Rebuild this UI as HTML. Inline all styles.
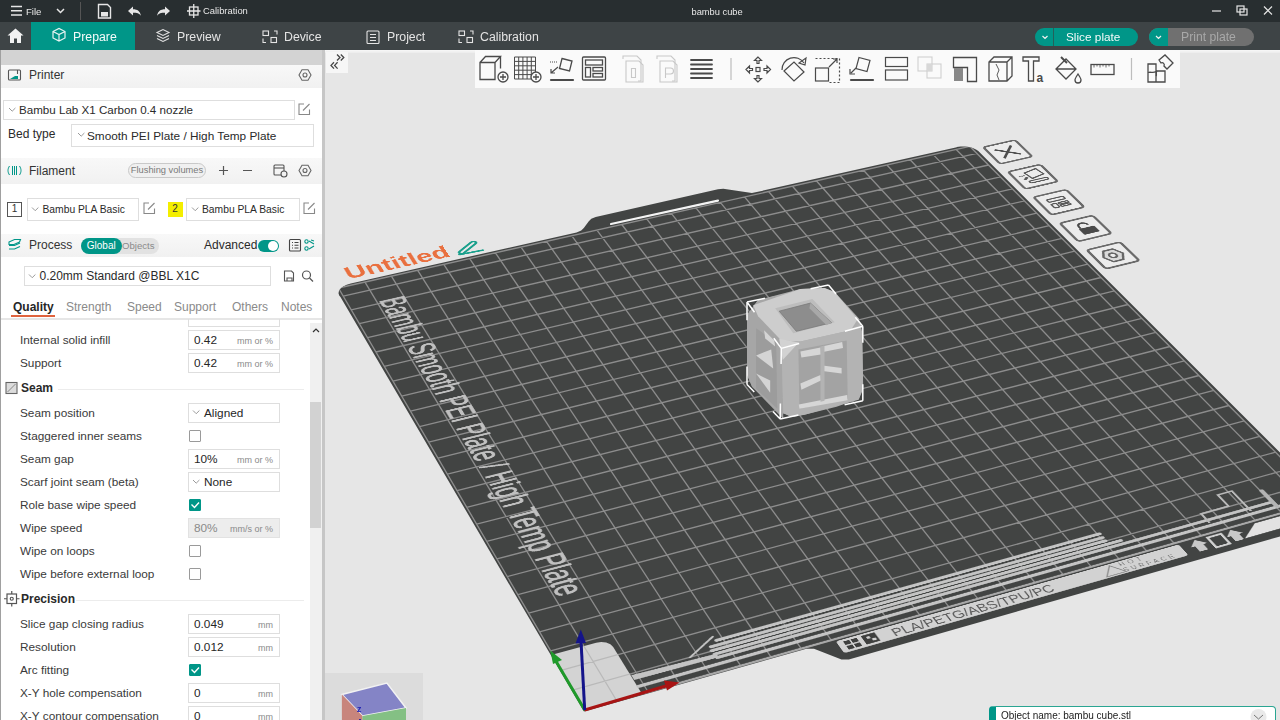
<!DOCTYPE html>
<html><head><meta charset="utf-8"><style>
*{box-sizing:border-box;margin:0;padding:0}
html,body{width:1280px;height:720px;overflow:hidden;background:#e6e6e6;font-family:"Liberation Sans",sans-serif;}
.a{position:absolute}

#title{left:0;top:0;width:1280px;height:22px;background:#282e30;color:#e8e8e8}
#tabs{left:0;top:22px;width:1280px;height:28px;background:#3e4446;color:#e4e4e4}
.tt{font-size:12.3px;line-height:28px;position:absolute;top:1px}


#panel{left:0;top:50px;width:322px;height:670px;background:#fff;overflow:hidden}
.hd{position:absolute;left:1px;width:321px;background:linear-gradient(#f8f8f8,#f1f1f1)}
.ht{position:absolute;left:29px;font-size:12px;color:#333;line-height:23px}
.lb{position:absolute;left:20px;font-size:11.8px;color:#3a3a3a;line-height:16px}
.bx{position:absolute;left:188px;width:92px;height:20px;border:1px solid #dedede;background:#fff}
.bx .v{position:absolute;left:5px;top:0;font-size:11.8px;line-height:18px;color:#262626}
.bx .u{position:absolute;right:6px;top:1px;font-size:9px;line-height:18px;color:#8a8a8a}
.cb{position:absolute;left:189px;width:12px;height:12px;border:1px solid #9a9a9a;background:#fff;border-radius:1px}
.cbk{background:#009688;border-color:#009688}
.dd{position:absolute;border:1px solid #dedede;background:#fff}
.dd .t{position:absolute;font-size:12px;color:#2a2a2a;line-height:18px;white-space:nowrap}
.sh{position:absolute;left:21px;font-size:12px;font-weight:bold;color:#2a2a2a;line-height:16px}
.sl{position:absolute;height:1px;background:#ececec}
.tb{position:absolute;font-size:12px;color:#8a8a8a;line-height:16px}

</style></head><body>
<svg class="a" style="left:0;top:0" width="1280" height="720">
<defs><clipPath id="cp"><polygon points="584.0,711.6 340.3,296.8 339.2,295.5 338.5,293.2 339.0,290.8 340.6,288.5 343.2,286.4 346.7,284.7 350.8,283.4 576.6,232.4 581.2,230.6 583.8,228.1 588.8,221.2 591.3,218.7 595.7,216.9 718.0,189.3 723.3,188.7 751.9,193.1 956.8,147.2 956.7,147.1 960.7,146.5 964.8,146.5 969.0,146.9 972.8,147.9 976.0,149.4 978.3,151.1 1334.5,506.9 1345.5,517.8 848.8,659.6 841.5,659.5 814.0,648.7 806.5,648.7"/></clipPath><clipPath id="ex"><polygon points="585.2,709.8 552.9,654.6 596.2,642.7 601.2,642.0 606.2,642.6 610.4,644.3 613.2,647.0 641.9,693.8"/></clipPath></defs>
<polygon points="584.0,711.6 340.3,296.8 339.2,295.5 338.5,293.2 339.0,290.8 340.6,288.5 343.2,286.4 346.7,284.7 350.8,283.4 576.6,232.4 581.2,230.6 583.8,228.1 588.8,221.2 591.3,218.7 595.7,216.9 718.0,189.3 723.3,188.7 751.9,193.1 956.8,147.2 956.7,147.1 960.7,146.5 964.8,146.5 969.0,146.9 972.8,147.9 976.0,149.4 978.3,151.1 1334.5,506.9 1345.5,517.8 848.8,659.6 841.5,659.5 814.0,648.7 806.5,648.7" fill="#424443"/>
<g clip-path="url(#cp)"><path d="M585.2,709.8L338.5,288.0 M585.2,709.8L1324.4,501.1 M616.8,700.9L365.0,282.1 M573.5,689.8L1307.9,484.5 M648.2,692.0L391.4,276.1 M562.0,670.1L1291.6,468.2 M679.3,683.2L417.7,270.3 M550.7,650.8L1275.5,452.2 M710.2,674.5L443.8,264.4 M539.5,631.8L1259.7,436.4 M740.8,665.9L469.7,258.6 M528.6,613.1L1244.2,420.8 M771.2,657.3L495.4,252.8 M517.9,594.7L1228.9,405.5 M801.4,648.8L521.0,247.1 M507.3,576.6L1213.8,390.4 M831.4,640.3L546.5,241.4 M496.9,558.9L1198.9,375.5 M861.2,631.9L571.7,235.7 M486.7,541.4L1184.3,360.9 M890.7,623.6L596.9,230.1 M476.6,524.2L1169.9,346.5 M920.0,615.3L621.8,224.5 M466.7,507.3L1155.7,332.3 M949.1,607.1L646.7,218.9 M457.0,490.6L1141.7,318.3 M978.0,598.9L671.3,213.4 M447.4,474.2L1127.9,304.5 M1006.6,590.8L695.9,207.9 M438.0,458.1L1114.3,290.9 M1035.1,582.8L720.3,202.4 M428.7,442.2L1100.9,277.5 M1063.3,574.8L744.5,196.9 M419.5,426.6L1087.7,264.2 M1091.4,566.9L768.6,191.5 M410.5,411.2L1074.7,251.2 M1119.2,559.1L792.5,186.2 M401.7,396.1L1061.9,238.4 M1146.9,551.2L816.3,180.8 M392.9,381.1L1049.2,225.7 M1174.3,543.5L840.0,175.5 M384.3,366.4L1036.7,213.2 M1201.5,535.8L863.5,170.3 M375.9,352.0L1024.4,200.9 M1228.6,528.2L886.9,165.0 M367.5,337.7L1012.3,188.8 M1255.5,520.6L910.1,159.8 M359.3,323.6L1000.3,176.8 M1282.1,513.1L933.2,154.6 M351.2,309.8L988.5,165.0 M1308.6,505.6L956.2,149.5 M343.2,296.1L976.9,153.3 M1324.4,501.1L969.9,146.4 M338.5,288.0L969.9,146.4" stroke="#8c8c8c" stroke-width="1.35" fill="none"/></g>
<polygon points="585.2,709.8 552.9,654.6 596.2,642.7 601.2,642.0 606.2,642.6 610.4,644.3 613.2,647.0 641.9,693.8" fill="#d3d3d3"/>
<g clip-path="url(#ex)"><path d="M585.2,709.8L338.5,288.0 M585.2,709.8L1324.4,501.1 M616.8,700.9L365.0,282.1 M573.5,689.8L1307.9,484.5 M648.2,692.0L391.4,276.1 M562.0,670.1L1291.6,468.2 M679.3,683.2L417.7,270.3 M550.7,650.8L1275.5,452.2 M710.2,674.5L443.8,264.4 M539.5,631.8L1259.7,436.4 M740.8,665.9L469.7,258.6 M528.6,613.1L1244.2,420.8 M771.2,657.3L495.4,252.8 M517.9,594.7L1228.9,405.5 M801.4,648.8L521.0,247.1 M507.3,576.6L1213.8,390.4 M831.4,640.3L546.5,241.4 M496.9,558.9L1198.9,375.5 M861.2,631.9L571.7,235.7 M486.7,541.4L1184.3,360.9 M890.7,623.6L596.9,230.1 M476.6,524.2L1169.9,346.5 M920.0,615.3L621.8,224.5 M466.7,507.3L1155.7,332.3 M949.1,607.1L646.7,218.9 M457.0,490.6L1141.7,318.3 M978.0,598.9L671.3,213.4 M447.4,474.2L1127.9,304.5 M1006.6,590.8L695.9,207.9 M438.0,458.1L1114.3,290.9 M1035.1,582.8L720.3,202.4 M428.7,442.2L1100.9,277.5 M1063.3,574.8L744.5,196.9 M419.5,426.6L1087.7,264.2 M1091.4,566.9L768.6,191.5 M410.5,411.2L1074.7,251.2 M1119.2,559.1L792.5,186.2 M401.7,396.1L1061.9,238.4 M1146.9,551.2L816.3,180.8 M392.9,381.1L1049.2,225.7 M1174.3,543.5L840.0,175.5 M384.3,366.4L1036.7,213.2 M1201.5,535.8L863.5,170.3 M375.9,352.0L1024.4,200.9 M1228.6,528.2L886.9,165.0 M367.5,337.7L1012.3,188.8 M1255.5,520.6L910.1,159.8 M359.3,323.6L1000.3,176.8 M1282.1,513.1L933.2,154.6 M351.2,309.8L988.5,165.0 M1308.6,505.6L956.2,149.5 M343.2,296.1L976.9,153.3 M1324.4,501.1L969.9,146.4 M338.5,288.0L969.9,146.4" stroke="#b9b9b9" stroke-width="1.2" fill="none"/></g>
</svg>
<div class="a" style="left:0;top:0;width:1280px;height:1200px;transform-origin:0 0;transform:matrix3d(0.6854195172,-0.1254341051,0,7.778967224e-05,0.1340917553,0.2810006888,0,-0.0001781084384,0,0,1,0,267.0794761,267.9477562,0,1)">
<svg width="1280" height="1200" style="position:absolute;left:0;top:0">
<line x1="272.0" y1="1063.2" x2="802.8" y2="1063.2" stroke="#c4c4c4" stroke-width="5.6" stroke-linecap="round"/>
<line x1="261.2" y1="1072.0" x2="802.4" y2="1072.0" stroke="#c4c4c4" stroke-width="5.6" stroke-linecap="round"/>
<line x1="259.2" y1="1079.2" x2="802.4" y2="1079.2" stroke="#c4c4c4" stroke-width="5.6" stroke-linecap="round"/>
<line x1="260.0" y1="1086.8" x2="820.8" y2="1086.8" stroke="#c4c4c4" stroke-width="5.6" stroke-linecap="round"/>
<line x1="260.4" y1="1094.0" x2="1040.0" y2="1094.0" stroke="#c4c4c4" stroke-width="5.6" stroke-linecap="round"/>
<line x1="154.0" y1="1105.6" x2="1048.0" y2="1105.6" stroke="#c4c4c4" stroke-width="5.6" stroke-linecap="round"/>
<line x1="154.0" y1="1119.6" x2="1104.0" y2="1119.6" stroke="#a8a8a8" stroke-width="3.6" stroke-linecap="round"/>
<line x1="230.0" y1="1080.4" x2="270.4" y2="1054.8" stroke="#c4c4c4" stroke-width="2.8" stroke-linecap="round"/>
<polygon points="152.8,1092.4 262.0,1094.0 262.0,1086.8 152.8,1082.8" fill="#c4c4c4"/>
<rect x="404.0" y="1124.0" width="480.0" height="24.8" rx="4.0" fill="#d2d2d2"/>
<g fill="#3e3f3e"><rect x="412.0" y="1128.0" width="8.0" height="7.2"/><rect x="422.0" y="1128.0" width="8.0" height="7.2"/><rect x="412.0" y="1137.6" width="8.0" height="7.2"/><rect x="422.0" y="1137.6" width="8.0" height="7.2"/><rect x="436.0" y="1127.2" width="18.4" height="17.6"/></g><g fill="#d2d2d2"><rect x="441.2" y="1131.2" width="4.4" height="4.4"/><rect x="446.4" y="1136.8" width="5.2" height="4.4"/></g>
<text x="474.0" y="1145.2" font-size="22.4" fill="#5a5a5a" textLength="222.0" lengthAdjust="spacingAndGlyphs" font-family="Liberation Sans">PLA/PETG/ABS/TPU/PC</text>
<path d="M768.0,1146.0L782.0,1127.2L796.0,1146.0z" fill="none" stroke="#8a8a8a" stroke-width="1.6"/>
<text x="794.0" y="1134.4" font-size="10.4" fill="#7a7a7a" font-family="Liberation Sans" textLength="32.0">HOT</text>
<text x="794.0" y="1146.4" font-size="10.4" fill="#7a7a7a" font-family="Liberation Sans" textLength="72.0">SURFACE</text>
<rect x="924.8" y="1126.4" width="20.0" height="22.4" fill="none" stroke="#d0d0d0" stroke-width="3.6"/>
<g fill="#c8c8c8"><path d="M901.2,1148.0v-12.0h-6.0l12.0,-12.0l12.0,12.0h-6.0v12.0z"/><path d="M954.0,1148.0v-12.0h-6.0l12.0,-12.0l12.0,12.0h-6.0v12.0z"/></g>
<polygon points="968.0,1147.2 1060.0,1147.2 1060.0,1124.8 996.0,1124.8" fill="#e2e2e2"/>
<path d="M1005.6,1100.0V1052.0H984.4V1078.8H943.6V1100.0" stroke="#b8b8b8" stroke-width="3.2" fill="none"/>
<line x1="1041.6" y1="1104.4" x2="1041.6" y2="1067.6" stroke="#b4b4b4" stroke-width="6.4" stroke-linecap="round"/>
<text transform="translate(124.0,152.0) rotate(90) scale(1,1.6)" x="0" y="0" font-size="32.8" fill="#c0c0c0" stroke="#c0c0c0" stroke-width="0.72" textLength="754.0" lengthAdjust="spacingAndGlyphs" font-family="Liberation Sans">Bambu Smooth PEI Plate / High Temp Plate</text>
<text x="100.0" y="78.8" font-size="48.8" font-weight="bold" fill="#e9703f" textLength="158.0" lengthAdjust="spacingAndGlyphs" font-family="Liberation Sans">Untitled</text>
<g stroke="#1aa08c" stroke-width="4.4" fill="none" stroke-linecap="round"><path d="M270.0,79.2L305.2,81.2"/><path d="M275.2,74.0L299.2,56.0" stroke-width="12.0"/><path d="M275.2,74.0L299.2,56.0" stroke="#e8e8e8" stroke-width="4.0"/></g>
<g transform="translate(1122.0,106.8)"><rect x="0" y="0" width="56.0" height="57.6" rx="5.2" fill="#ececec" stroke="#6a6a6a" stroke-width="4.4"/><g transform="translate(0,2.8) scale(0.875,1)"><path d="M14.0,12.0L50.0,40.0M48.0,10.0L16.0,42.0" stroke="#4e4e4e" stroke-width="4.8"/></g></g>
<g transform="translate(1122.0,191.2)"><rect x="0" y="0" width="56.0" height="57.6" rx="5.2" fill="#ececec" stroke="#6a6a6a" stroke-width="4.4"/><g transform="translate(0,2.8) scale(0.875,1)"><g stroke="#5a5a5a" stroke-width="3.2" fill="none"><rect x="26.0" y="8.0" width="26.0" height="20.0" transform="rotate(-12 39.0 18.0)"/><rect x="18.0" y="36.0" width="36.0" height="6.4" rx="3.2"/><path d="M10.0,18.0h12.0" stroke-dasharray="2.4 1.6"/><path d="M14.0,30.0l8.0,-6.0" stroke-width="4.8"/></g></g></g>
<g transform="translate(1122.0,275.6)"><rect x="0" y="0" width="56.0" height="57.6" rx="5.2" fill="#ececec" stroke="#6a6a6a" stroke-width="4.4"/><g transform="translate(0,2.8) scale(0.875,1)"><g stroke="#5a5a5a" stroke-width="3.2" fill="none"><rect x="16.0" y="12.8" width="32.0" height="8.0" rx="2.4"/><rect x="16.0" y="27.2" width="10.0" height="12.0" rx="2.4"/><rect x="30.0" y="27.2" width="18.0" height="4.8" rx="2.0"/><rect x="30.0" y="34.4" width="18.0" height="4.8" rx="2.0"/></g></g></g>
<g transform="translate(1122.0,360.0)"><rect x="0" y="0" width="56.0" height="57.6" rx="5.2" fill="#ececec" stroke="#6a6a6a" stroke-width="4.4"/><g transform="translate(0,2.8) scale(0.875,1)"><g><rect x="20.0" y="24.0" width="30.0" height="18.0" rx="2.0" fill="#4a4a4a"/><path d="M24.0,24.0v-6.0a8.8,8.0 0 0 1 17.6,0" stroke="#4a4a4a" stroke-width="4.0" fill="none"/></g></g></g>
<g transform="translate(1122.0,444.4)"><rect x="0" y="0" width="56.0" height="57.6" rx="5.2" fill="#ececec" stroke="#6a6a6a" stroke-width="4.4"/><g transform="translate(0,2.8) scale(0.875,1)"><g stroke="#666" stroke-width="4.0" fill="#dadada"><path d="M14.0,26.0l9.2,-16.0h18.4l9.2,16.0l-9.2,16.0h-18.4z"/><circle cx="32.0" cy="26.0" r="6.4" fill="#ececec"/></g></g></g>
</svg></div>
<svg class="a" style="left:0;top:0" width="1280" height="720">
<path d="M611 224L718 200.6" stroke="#f4f4f4" stroke-width="2.2" stroke-linecap="round"/>
<polygon points="747.0,315.2 758.1,300.1 800.4,289.1 824.5,288.0 834.6,292.1 858.7,318.2 861.8,332.3 862.8,388.7 858.7,398.7 836.6,406.8 804.4,414.8 794.3,416.8 780.2,412.8 752.1,386.7 747.0,374.6" fill="#adadad"/>
<polygon points="747.0,315.2 758.1,300.1 775.2,296.1 781.3,340.4 783.3,418.9 752.1,386.7 747.0,374.6" fill="#a6a6a6"/>
<polygon points="753.1,305.2 800.4,289.1 824.5,288.0 834.6,292.1 857.7,319.2 850.7,330.3 800.4,341.4 781.3,340.4 758.1,316.2" fill="#cdcdcd"/>
<polygon points="781.3,340.4 800.4,341.4 850.7,330.3 860.7,323.3 862.4,334.3 863.2,388.7 858.7,399.7 804.4,414.8 790.3,416.8 783.3,412.8" fill="#b3b3b3"/>
<polygon points="775.2,308.2 812.4,299.1 834.6,322.3 793.3,333.3" fill="#bdbdbd"/>
<polygon points="779.2,311.2 810.4,303.1 831.6,322.7 796.3,331.3" fill="#8d8d8d" stroke="#7a7a7a" stroke-width="0.8"/>
<polygon points="810.4,303.1 831.6,322.7 826.5,325.3 809.4,308.2" fill="#a8a8a8"/>
<polygon points="798.4,349.4 846.7,340.4 847.7,398.7 799.4,408.8" fill="#a3a3a3"/>
<polygon points="779.2,338.8 798.8,342.4 782.7,360.1" fill="#d2d2d2"/>
<polygon points="800.4,351.4 820.5,347.4 820.9,354.5 801.4,357.5" fill="#d6d6d6"/>
<polygon points="822.1,346.4 842.2,342.0 843.0,348.0 822.9,352.0" fill="#d6d6d6"/>
<polygon points="822.5,365.5 841.6,368.1 841.6,373.6 822.5,371.0" fill="#d6d6d6"/>
<polygon points="800.4,383.6 820.5,375.0 820.9,380.6 801.4,389.7" fill="#d6d6d6"/>
<polygon points="798.8,404.4 847.1,395.1 847.5,400.3 799.4,408.8" fill="#d6d6d6"/>
<polygon points="820.5,346.4 824.5,345.4 824.5,400.7 820.5,401.8" fill="#b3b3b3"/>
<polygon points="756.1,328.3 776.2,342.4 777.2,408.8 756.1,388.7" fill="#9c9c9c"/>
<polygon points="756.1,355.5 771.2,349.4 773.2,368.5" fill="#d4d4d4"/>
<polygon points="756.1,373.6 770.2,380.6 770.2,392.7" fill="#d4d4d4"/>
<polygon points="764.1,330.3 774.2,340.4 775.2,346.4 765.2,338.4" fill="#d4d4d4"/>
<path d="M747.0 302.0L764.9 298.3 M828.5 285.0L810.6 288.7 M747.0 302.0L754.5 312.2 M781.3 348.4L773.8 338.2 M747.0 302.0L747.0 320.2 M747.0 384.6L747.0 366.4 M828.5 285.0L836.0 294.1 M862.8 326.3L855.3 317.2 M862.8 326.3L844.9 331.2 M781.3 348.4L799.2 343.5 M862.8 326.3L862.8 342.7 M862.8 400.7L862.8 384.3 M781.3 348.4L781.1 363.9 M780.2 418.9L780.4 403.4 M747.0 384.6L754.3 392.1 M780.2 418.9L772.9 411.4 M780.2 418.9L798.4 414.9 M862.8 400.7L844.6 404.7" stroke="#ffffff" stroke-width="1.5" fill="none"/>
<path d="M584.7 710L553.5 657" stroke="#1f9a2a" stroke-width="3"/><path d="M550.3 650.6L562 660L553 664z" fill="#1f9a2a"/>
<path d="M584.7 710L666 686" stroke="#a81414" stroke-width="3"/><path d="M679.5 682.5L664 680.5L667 690.5z" fill="#a81414"/>
<path d="M584.7 710L581 641" stroke="#14148a" stroke-width="3"/><path d="M580.8 629.5L575.5 643.5L586 643z" fill="#14148a"/>
</svg>
<div class="a" style="left:325px;top:50px;width:955px;height:3px;background:linear-gradient(#f8f8f8,#ececec)"></div>
<div class="a" style="left:474.5px;top:50px;width:705px;height:38px;background:#fafafa"></div>
<div class="a" style="left:325.5px;top:52px;width:22.5px;height:20.5px;background:#f6f6f6"></div>
<svg class="a" style="left:0;top:0" width="1280" height="100">
<path d="M337 54.5l3 3l-3 3M340.8 54.5l3 3l-3 3M334 62.2l-3 3.2l3 3.2M337.6 62.2l-3 3.2l3 3.2" stroke="#454545" stroke-width="1.3" fill="none"/>
<g stroke="#4a4a4a" stroke-width="1.3" fill="none"><path d="M480 62.5h15v17h-15z M480 62.5l5.5-6h15l-5.5 6M500.5 56.5v12"/><circle cx="503" cy="77" r="5" fill="#fafafa"/><path d="M500 77h6M503 74v6"/><path d="M514.5 57h21v22h-21z M518.7 57v22M522.9 57v22M527.1 57v22M531.3 57v22M514.5 61.4h21M514.5 65.8h21M514.5 70.2h21M514.5 74.6h21" stroke-width="1"/><circle cx="536" cy="77" r="5" fill="#fafafa"/><path d="M533 77h6M536 74v6"/><path d="M562 58.5l10 2.5l-2.5 10l-10-2.5z"/><path d="M551 80h22" stroke-width="2.2" stroke-linecap="round"/><path d="M558 67l-7 6M551 69v4h4" stroke-width="1.2"/><path d="M550 62h7" stroke-width="1" stroke-dasharray="1 1"/><rect x="582.5" y="57" width="23" height="23" rx="1"/><rect x="585.5" y="60" width="17" height="5"/><rect x="585.5" y="67.5" width="5" height="9.5"/><rect x="593" y="67.5" width="9.5" height="3.5"/><rect x="593" y="73.5" width="9.5" height="3.5"/></g><g stroke="#c8c8c8" stroke-width="1.1" fill="none"><path d="M623 59v-3h14l4 4v21h-3"/><path d="M626 61h13l4 4v17h-17z"/><path d="M631.5 68.5h4v9h-4z"/><path d="M657 59v-3h14l4 4v21h-3"/><path d="M660 61h13l4 4v17h-17z"/><path d="M665.5 78v-10h5a3 3 0 0 1 0 6h-5"/></g><g stroke="#4a4a4a" stroke-width="1.8" fill="none" stroke-linecap="round"><path d="M691 60h21M691 64.5h21M691 69h21M691 73.5h21M691 78h21"/></g><path d="M731 58v22M1131.5 58v22" stroke="#bdbdbd" stroke-width="1.2"/><g stroke="#4a4a4a" stroke-width="1.2" fill="none"><path d="M758 57l-3.5 3.5h2.5v3h2v-3h2.5z M758 82l-3.5-3.5h2.5v-3h2v3h2.5z M746 69.5l3.5-3.5v2.5h3v2h-3v2.5z M770.5 69.5l-3.5-3.5v2.5h-3v2h3v2.5z"/><rect x="756" y="67.5" width="4" height="4"/><path d="M784 75l10-9l10 10l-10 9z" transform="translate(0,-4)"/><path d="M782 70a12 12 0 0 1 22-7"/><path d="M806 58l-1 7l-6-2z"/><rect x="815.5" y="68" width="13" height="13"/><path d="M815.5 58.5h24v24h-11" stroke-dasharray="2 2"/><path d="M829 67l8-8M833 59h4v4"/><path d="M859 57.5l11 3l-3 11l-11-3z"/><path d="M851 80h22" stroke-width="2.2" stroke-linecap="round"/><path d="M856 68l-5 5M850 69v5h5"/><rect x="885.5" y="57.5" width="22" height="9"/><rect x="885.5" y="70" width="22" height="10"/></g><g stroke="#d0d0d0" stroke-width="1.1" fill="none"><rect x="918" y="57" width="14" height="14"/><rect x="927" y="64" width="14" height="14"/></g><rect x="927" y="64" width="5" height="7" fill="#d8d8d8"/><g stroke="#4a4a4a" stroke-width="1.3" fill="none"><path d="M953.5 57.5h23v24h-9v-14h-14z"/><rect x="954" y="68" width="9" height="13" fill="#888" stroke="none"/><path d="M989 62l5-5h18v19l-5 5h-18z M989 62h18v19M1007 62l5-5"/><path d="M996 64l3 6l-2 5l2 5" stroke-width="0.9"/><path d="M1023 57h16v4h-5.5v20h-5v-20h-5.5z"/><path d="M1056 69l10-10l10 10l-10 10z M1056 69h20"/><path d="M1078 74c-2 3-3 4.5-3 6a3 3 0 0 0 6 0c0-1.5-1-3-3-6z"/><path d="M1061 57l6 6" stroke-width="2"/><rect x="1091" y="64.5" width="23" height="10"/><path d="M1094 64.5v3M1097 64.5v2M1100 64.5v3M1103 64.5v2M1106 64.5v3M1109 64.5v2" stroke-width="0.8"/><path d="M1148 64h8v18h-8z M1156 71h9v11h-9"/><path d="M1148 72.5c3-1 5 1 8-1M1156 76c1.5-2 -1-3 1-5"/><path d="M1159 60l6-5l8 8l-6 6l-3-3c1-2-1-4-3-3z"/></g>
<text x="1036.5" y="81.5" font-size="12" font-family="Liberation Sans, sans-serif" font-weight="bold" fill="#4a4a4a">a</text>
</svg>
<div class="a" style="left:324.5px;top:672.5px;width:98.5px;height:48px;background:#dcdcdc"></div>
<svg class="a" style="left:320px;top:660px" width="110" height="60"><polygon points="21.9,34.4 66.9,23 86,48 42.5,56" fill="#8484c6" stroke="#f2f2f2" stroke-width="1.5"/><polygon points="21.9,34.4 42.5,56 42.5,70 21.9,70" fill="#c8857c"/><polygon points="42.5,56 86,48 86,70 42.5,70" fill="#84c084"/><text x="37" y="52" font-size="7" fill="#1a1ab0" font-family="Liberation Sans" font-weight="bold">Z</text><path d="M40 60v10M37 64l3-5l3 5z" stroke="#1a1ab0" fill="#1a1ab0"/></svg>
<div class="a" style="left:989px;top:705.5px;width:286.5px;height:20px;border:1.3px solid #2aa592;border-left:7px solid #009688;border-radius:4px;background:#fff"></div>
<div class="a" style="left:1001px;top:709px;font-size:10px;line-height:14px;color:#222">Object name: bambu cube.stl</div>
<svg class="a" style="left:1240px;top:700px" width="40" height="20"><circle cx="18.5" cy="17" r="8" fill="#e9e9e9"/><path d="M14 15l4.5 4l4.5-4" stroke="#777" stroke-width="1" fill="none"/></svg>

<div id="title" class="a">
 <svg class="a" style="left:0;top:0" width="1280" height="22">
  <g stroke="#e6e6e6" stroke-width="1.4" fill="none">
   <path d="M11 6.5h11M11 10.8h11M11 15h11"/>
   <path d="M57 9l3.5 3.5L64 9" stroke-width="1.5"/>
   <path d="M80.5 2v18" stroke="#555" stroke-width="1"/>
  </g>
  <g fill="#e6e6e6">
   <path d="M98.5 4.5h9l3 3v10.5h-12z" fill="none" stroke="#e6e6e6" stroke-width="1.4"/>
   <rect x="101" y="12" width="7" height="4.5" fill="#e6e6e6"/>
   <path d="M128 11l5-4.5v2.8c4.5 0 7 2 8 6.5c-1.8-2.5-4-3-8-3v2.8z"/>
   <path d="M170 11l-5-4.5v2.8c-4.5 0-7 2-8 6.5c1.8-2.5 4-3 8-3v2.8z"/>
  </g>
  <g stroke="#e6e6e6" stroke-width="1.3" fill="none">
   <rect x="189.5" y="7" width="8.5" height="8"/>
   <path d="M193.75 4v14M187 11h13.5"/>
  </g>
  <g stroke="#e6e6e6" stroke-width="1.2" fill="none">
   <path d="M1212 11h9"/>
   <rect x="1237" y="6" width="7" height="6"/><rect x="1240" y="9" width="7" height="6"/>
   <path d="M1264 6.5l8 8M1272 6.5l-8 8"/>
  </g>
 </svg>
 <div class="a" style="left:26px;top:0.5px;font-size:9.6px;line-height:22px">File</div>
 <div class="a" style="left:203px;top:0;font-size:9.4px;line-height:22px">Calibration</div>
 <div class="a" style="left:691.5px;top:0.8px;font-size:9.3px;line-height:22px">bambu cube</div>
</div>
<div id="tabs" class="a">
 <div class="a" style="left:31px;top:0;width:104px;height:28px;background:#009688"></div>
 <svg class="a" style="left:0;top:0" width="600" height="28">
  <path d="M15.5 6.5l-8 7h2.5v7.5h4v-4.5h3v4.5h4v-7.5h2.5z" fill="#f2f2f2"/>
  <g stroke="#e8f4f2" stroke-width="1.2" fill="none" transform="translate(0,1)">
   <path d="M53 8.5l6 -3l6 3v6.5l-6 3l-6-3z M53 8.5l6 3l6-3M59 11.5v6.5"/>
  </g>
  <g stroke="#e4e4e4" stroke-width="1.1" fill="none" transform="translate(0,1.5)">
   <path d="M157 9l6-3l6 3l-6 3z M157 12l6 3l6-3M157 15l6 3l6-3"/>
   <rect x="263" y="7.5" width="5.5" height="4.5"/><path d="M263 15v4h3M277 11v-3.5h-3"/><rect x="271" y="14" width="5.5" height="5"/>
   <rect x="367" y="7.5" width="12" height="12.5" rx="1"/><path d="M370 11h6M370 14h6M370 17h6"/>
   <rect x="459" y="7.5" width="5.5" height="4.5"/><path d="M459 15v4h3M473 11v-3.5h-3"/><rect x="467" y="14" width="5.5" height="5"/>
  </g>
 </svg>
 <div class="tt" style="left:73px;color:#f4fbfa">Prepare</div>
 <div class="tt" style="left:177px">Preview</div>
 <div class="tt" style="left:284px">Device</div>
 <div class="tt" style="left:387px">Project</div>
 <div class="tt" style="left:480px">Calibration</div>
 <div class="a" style="left:1035px;top:5.5px;width:103px;height:18.5px;border-radius:9.5px;background:#009688"></div>
 <div class="a" style="left:1053px;top:5.5px;width:1.2px;height:18.5px;background:#24605a"></div>
 <div class="a" style="left:1066px;top:5.5px;font-size:11.8px;line-height:18.5px;color:#f4fbfa">Slice plate</div>
 <div class="a" style="left:1149px;top:5.5px;width:105px;height:18.5px;border-radius:9.5px;background:#707070;overflow:hidden"><div class="a" style="left:0;top:0;width:19px;height:19px;background:#009688"></div></div>
 <div class="a" style="left:1181px;top:5.5px;font-size:12.2px;line-height:18.5px;color:#a8a8a8">Print plate</div>
 <svg class="a" style="left:1030px;top:0" width="150" height="28">
  <path d="M12.5 14l2.5 2.5l2.5-2.5M126 14l2.5 2.5l2.5-2.5" stroke="#f0f0f0" stroke-width="1.2" fill="none"/>
 </svg>
</div>

<div id="panel" class="a"><div class="a" style="left:0;top:0;width:322px;height:14.5px;background:#d3d3d3"></div>
<div class="a" style="left:0;top:0;width:1px;height:670px;background:#a0a0a0"></div>
<div class="hd" style="top:14.5px;height:23px"></div>
<div class="ht" style="top:14px">Printer</div>
<div class="dd" style="left:3px;top:50px;width:292px;height:20px"><div class="t" style="left:15px;top:0;font-size:11.6px">Bambu Lab X1 Carbon 0.4 nozzle</div></div>
<div class="a" style="left:8px;top:76px;font-size:12px;color:#2a2a2a;line-height:16px">Bed type</div>
<div class="dd" style="left:71px;top:73.5px;width:243px;height:23px"><div class="t" style="left:15px;top:2px;font-size:11.8px">Smooth PEI Plate / High Temp Plate</div></div>
<div class="hd" style="top:108px;height:26px"></div>
<div class="ht" style="top:109px;line-height:24px">Filament</div>
<div class="a" style="left:128px;top:113px;width:78px;height:15px;border:1px solid #c9c9c9;border-radius:7.5px;background:#f0f0f0;font-size:9.3px;color:#7a7a7a;line-height:13px;text-align:center">Flushing volumes</div>
<div class="a" style="left:7px;top:152px;width:15px;height:14.5px;border:1px solid #555;font-size:10px;line-height:12.5px;text-align:center;color:#333">1</div>
<div class="dd" style="left:26.5px;top:148px;width:112px;height:22.5px"><div class="t" style="left:15px;top:2px;font-size:10.3px">Bambu PLA Basic</div></div>
<div class="a" style="left:167.5px;top:152px;width:15px;height:14.5px;background:#f4ee00;font-size:10px;line-height:14.5px;text-align:center;color:#333">2</div>
<div class="dd" style="left:186px;top:148px;width:113.5px;height:22.5px"><div class="t" style="left:15px;top:2px;font-size:10.3px">Bambu PLA Basic</div></div>
<div class="hd" style="top:184px;height:23px"></div>
<div class="ht" style="top:183.5px">Process</div>
<div class="a" style="left:81px;top:188px;width:78px;height:15.5px;border-radius:8px;background:#e2e2e2"></div>
<div class="a" style="left:81px;top:188px;width:40.5px;height:15.5px;border-radius:8px;background:#009688;color:#fff;font-size:10px;line-height:15.5px;text-align:center">Global</div>
<div class="a" style="left:122px;top:188px;font-size:9.6px;line-height:15.5px;color:#8a8a8a">Objects</div>
<div class="a" style="left:204px;top:187px;font-size:12px;line-height:16px;color:#2a2a2a">Advanced</div>
<div class="a" style="left:257.5px;top:190px;width:21px;height:11.5px;border-radius:6px;background:#009688"></div>
<div class="a" style="left:268px;top:191px;width:9.5px;height:9.5px;border-radius:5px;background:#fff"></div>
<div class="dd" style="left:23.5px;top:216px;width:247px;height:20px"><div class="t" style="left:15px;top:0">0.20mm Standard @BBL X1C</div></div>
<div class="tb" style="left:13px;top:249px;color:#262626;font-weight:bold">Quality</div>
<div class="tb" style="left:66px;top:249px;color:#8a8a8a;font-weight:normal">Strength</div>
<div class="tb" style="left:127px;top:249px;color:#8a8a8a;font-weight:normal">Speed</div>
<div class="tb" style="left:174px;top:249px;color:#8a8a8a;font-weight:normal">Support</div>
<div class="tb" style="left:232px;top:249px;color:#8a8a8a;font-weight:normal">Others</div>
<div class="tb" style="left:281px;top:249px;color:#8a8a8a;font-weight:normal">Notes</div>
<div class="a" style="left:11px;top:265px;width:44px;height:2px;background:#e0633e"></div>
<div class="a" style="left:1px;top:268px;width:321px;height:1.5px;background:#e6e6e6"></div>
<div class="a" style="left:310px;top:273px;width:12px;height:400px;background:#f0f0f0"></div>
<div class="a" style="left:310px;top:352px;width:11px;height:126px;background:#d2d2d2"></div>
<div class="a" style="left:188px;top:269px;width:92px;height:7.5px;border:1px solid #dedede;border-top:none"></div>
<div class="lb" style="top:281.7px;color:#3a3a3a">Internal solid infill</div>
<div class="bx" style="top:280px;background:#fff;border-color:#dedede"><div class="v" style="color:#262626">0.42</div><div class="u">mm or %</div></div>
<div class="lb" style="top:304.7px;color:#3a3a3a">Support</div>
<div class="bx" style="top:302.5px;background:#fff;border-color:#dedede"><div class="v" style="color:#262626">0.42</div><div class="u">mm or %</div></div>
<div class="sh" style="top:330px">Seam</div>
<div class="sl" style="left:58px;top:338.5px;width:246px"></div>
<div class="lb" style="top:354.7px;color:#3a3a3a">Seam position</div>
<div class="bx" style="top:352.5px"><div class="v" style="left:15px">Aligned</div></div>
<div class="lb" style="top:377.7px;color:#3a3a3a">Staggered inner seams</div>
<div class="cb" style="top:379.5px"></div>
<div class="lb" style="top:400.7px;color:#3a3a3a">Seam gap</div>
<div class="bx" style="top:399px;background:#fff;border-color:#dedede"><div class="v" style="color:#262626">10%</div><div class="u">mm or %</div></div>
<div class="lb" style="top:423.7px;color:#3a3a3a">Scarf joint seam (beta)</div>
<div class="bx" style="top:422px"><div class="v" style="left:15px">None</div></div>
<div class="lb" style="top:446.7px;color:#3a3a3a">Role base wipe speed</div>
<div class="cb cbk" style="top:448.5px"></div>
<div class="lb" style="top:469.70000000000005px;color:#3a3a3a">Wipe speed</div>
<div class="bx" style="top:468px;background:#ededed;border-color:#e2e2e2"><div class="v" style="color:#8a8a8a">80%</div><div class="u">mm/s or %</div></div>
<div class="lb" style="top:492.70000000000005px;color:#3a3a3a">Wipe on loops</div>
<div class="cb" style="top:494.5px"></div>
<div class="lb" style="top:515.7px;color:#3a3a3a">Wipe before external loop</div>
<div class="cb" style="top:517.5px"></div>
<div class="sh" style="top:541px">Precision</div>
<div class="sl" style="left:76px;top:549.5px;width:228px"></div>
<div class="lb" style="top:565.7px;color:#3a3a3a">Slice gap closing radius</div>
<div class="bx" style="top:564px;background:#fff;border-color:#dedede"><div class="v" style="color:#262626">0.049</div><div class="u">mm</div></div>
<div class="lb" style="top:588.7px;color:#3a3a3a">Resolution</div>
<div class="bx" style="top:587px;background:#fff;border-color:#dedede"><div class="v" style="color:#262626">0.012</div><div class="u">mm</div></div>
<div class="lb" style="top:611.7px;color:#3a3a3a">Arc fitting</div>
<div class="cb cbk" style="top:613.5px"></div>
<div class="lb" style="top:634.7px;color:#3a3a3a">X-Y hole compensation</div>
<div class="bx" style="top:633px;background:#fff;border-color:#dedede"><div class="v" style="color:#262626">0</div><div class="u">mm</div></div>
<div class="lb" style="top:657.7px;color:#3a3a3a">X-Y contour compensation</div>
<div class="bx" style="top:656px;background:#fff;border-color:#dedede"><div class="v" style="color:#262626">0</div><div class="u">mm</div></div><svg class="a" style="left:0;top:0" width="322" height="670"><path d="M9 58l3.2 3.2l3.2-3.2" stroke="#9a9a9a" stroke-width="1" fill="none"/>
<path d="M78 83l3.2 3.2l3.2-3.2" stroke="#9a9a9a" stroke-width="1" fill="none"/>
<path d="M32 157.5l3.2 3.2l3.2-3.2" stroke="#9a9a9a" stroke-width="1" fill="none"/>
<path d="M192 157.5l3.2 3.2l3.2-3.2" stroke="#9a9a9a" stroke-width="1" fill="none"/>
<path d="M29 224.5l3.2 3.2l3.2-3.2" stroke="#9a9a9a" stroke-width="1" fill="none"/>
<path d="M193 360.5l3.2 3.2l3.2-3.2" stroke="#9a9a9a" stroke-width="1" fill="none"/>
<path d="M193 430l3.2 3.2l3.2-3.2" stroke="#9a9a9a" stroke-width="1" fill="none"/>
<g stroke="#555" stroke-width="1.1" fill="none"><rect x="8.5" y="20" width="12" height="10" rx="1"/><path d="M17.5 20v4" /></g><path d="M10 29l5-3l3 0v3z" fill="#009688"/>
<path d="M299 25l3-5.2h6l3 5.2l-3 5.2h-6z" stroke="#666" stroke-width="1.1" fill="none"/><circle cx="305" cy="25" r="2" stroke="#666" stroke-width="1.1" fill="none"/>
<g stroke="#888" stroke-width="1.1" fill="none"><path d="M304 54h-5v10.5h10.5v-5"/><path d="M303 60.5l6.5-6.5"/></g>
<g stroke="#888" stroke-width="1.1" fill="none"><path d="M149 153h-5v10.5h10.5v-5"/><path d="M148 159.5l6.5-6.5"/></g>
<g stroke="#888" stroke-width="1.1" fill="none"><path d="M309 153h-5v10.5h10.5v-5"/><path d="M308 159.5l6.5-6.5"/></g>
<g stroke="#009688" stroke-width="1" fill="none"><path d="M9.5 116c-2 3-2 6 0 9M19.5 116c2 3 2 6 0 9"/><path d="M12.5 116v9M14.5 116v9M16.5 116v9"/></g>
<g stroke="#555" stroke-width="1.2" fill="none"><path d="M219 120.5h9M223.5 116v9M243 120.5h9"/></g>
<g stroke="#555" stroke-width="1.1" fill="none"><rect x="274" y="115" width="10" height="10" rx="1"/><path d="M274 118h10"/><circle cx="284" cy="124" r="3" fill="#f2f2f2"/></g>
<path d="M299 120.5l3-5.2h6l3 5.2l-3 5.2h-6z" stroke="#666" stroke-width="1.1" fill="none"/><circle cx="305" cy="120.5" r="2" stroke="#666" stroke-width="1.1" fill="none"/>
<g stroke="#009688" stroke-width="1.1" fill="none"><path d="M9 192l5.5-2.5h6l-1 2.5l-5.5 2.5h-5z"/><path d="M9 195.5h5.5l5.5-2.5M9 199h5.5l5.5-2.5"/></g>
<g stroke="#444" stroke-width="1.1" fill="none"><rect x="289.5" y="189.5" width="11" height="11.5" rx="1"/><path d="M292 192.5h1M294.5 192.5h4M292 195.2h1M294.5 195.2h4M292 198h1M294.5 198h4"/></g>
<g stroke="#009688" stroke-width="1.1" fill="none"><circle cx="306.5" cy="191.5" r="1.7"/><circle cx="306.5" cy="198.5" r="1.7"/><path d="M309 191l5 3M309 199l5-3M311 190l3 1"/></g>
<g stroke="#555" stroke-width="1.1" fill="none"><path d="M284.5 221h7l2 2v8h-9z"/><path d="M287 231v-3h5v3"/></g>
<g stroke="#555" stroke-width="1.2" fill="none"><circle cx="306.5" cy="225" r="4"/><path d="M309.5 228l3.5 3.5"/></g>
<path d="M313 282l3-3l3 3" stroke="#333" stroke-width="1.2" fill="none"/>
<g stroke="#666" stroke-width="1.1" fill="#dcdcdc"><rect x="6" y="332.5" width="11" height="11"/></g><path d="M7.5 342l8-8" stroke="#888" stroke-width="1"/>
<g stroke="#555" stroke-width="1.2" fill="none"><rect x="7" y="544" width="9.5" height="9.5"/><path d="M11.75 541v3M11.75 553.5v3M4 548.75h3M16.5 548.75h3"/><circle cx="11.75" cy="548.75" r="1.5"/></g>
<path d="M191.5 454.5l3 3l4.5-5" stroke="#fff" stroke-width="1.4" fill="none"/>
<path d="M191.5 619.5l3 3l4.5-5" stroke="#fff" stroke-width="1.4" fill="none"/></svg></div><div class="a" style="left:322px;top:50px;width:3px;height:670px;background:#c6c6c6"></div>
</body></html>
